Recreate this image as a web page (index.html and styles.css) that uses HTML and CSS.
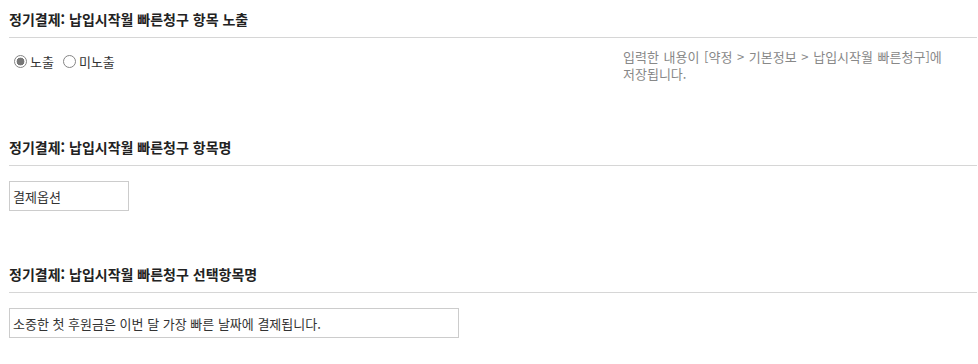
FILE: index.html
```html
<!DOCTYPE html>
<html lang="ko">
<head>
<meta charset="utf-8">
<link rel="stylesheet" href="styles.css">
</head>
<body>
<div class="page">
  <section class="field">
    <h2 class="field-title">정기결제: 납입시작월 빠른청구 항목 노출</h2>
    <div class="field-body split">
      <div class="radios">
        <input type="radio" name="show" id="show-y" checked><label for="show-y">노출</label>
        <input type="radio" name="show" id="show-n"><label for="show-n">미노출</label>
      </div>
      <p class="help">입력한 내용이 [약정 &gt; 기본정보 &gt; 납입시작월 빠른청구]에 저장됩니다.</p>
    </div>
  </section>
  <section class="field">
    <h2 class="field-title">정기결제: 납입시작월 빠른청구 항목명</h2>
    <div class="field-body">
      <input class="text short" type="text" value="결제옵션">
    </div>
  </section>
  <section class="field">
    <h2 class="field-title">정기결제: 납입시작월 빠른청구 선택항목명</h2>
    <div class="field-body">
      <input class="text long" type="text" value="소중한 첫 후원금은 이번 달 가장 빠른 날짜에 결제됩니다.">
    </div>
  </section>
</div>
</body>
</html>
```

FILE: styles.css
```css
html, body {
  margin: 0;
  padding: 0;
  background: #fff;
}
body {
  font-family: "Noto Sans CJK KR", "Noto Sans", sans-serif;
  font-size: 13px;
  color: #333;
}
.page {
  padding: 0 1px 0 9px;
}
.field {
  margin-bottom: 44px;
}
.field-title {
  margin: 0;
  padding: 10px 0 9px;
  font-size: 14px;
  line-height: 18px;
  font-weight: bold;
  color: #222;
  border-bottom: 1px solid #d6d6d6;
}
.field-body {
  padding-top: 15px;
}
.split {
  display: flex;
  justify-content: space-between;
  align-items: flex-start;
  padding-top: 10px;
  padding-bottom: 2px;
}
.radios {
  display: flex;
  align-items: center;
  height: 17px;
  padding-top: 5px;
  line-height: 17px;
}
.radios input {
  appearance: none;
  -webkit-appearance: none;
  width: 13px;
  height: 13px;
  margin: 0 3px 0 5px;
  border: 1px solid #858585;
  border-radius: 50%;
  background: #fff;
  box-sizing: border-box;
}
.radios input:checked {
  background: radial-gradient(circle, #777 0 3.6px, #fff 4.2px);
}
.radios label {
  margin-right: 4px;
}
.help {
  margin: 0;
  width: 354px;
  font-size: 13px;
  line-height: 17px;
  color: #888;
  word-break: keep-all;
  word-spacing: 1px;
}
.text {
  display: block;
  box-sizing: border-box;
  height: 30px;
  margin: 0;
  padding: 0 3px;
  border: 1px solid #ccc;
  font-family: inherit;
  font-size: 13px;
  color: #333;
  background: #fff;
  outline: none;
}
.short {
  width: 120px;
}
.long {
  width: 450px;
}
```
